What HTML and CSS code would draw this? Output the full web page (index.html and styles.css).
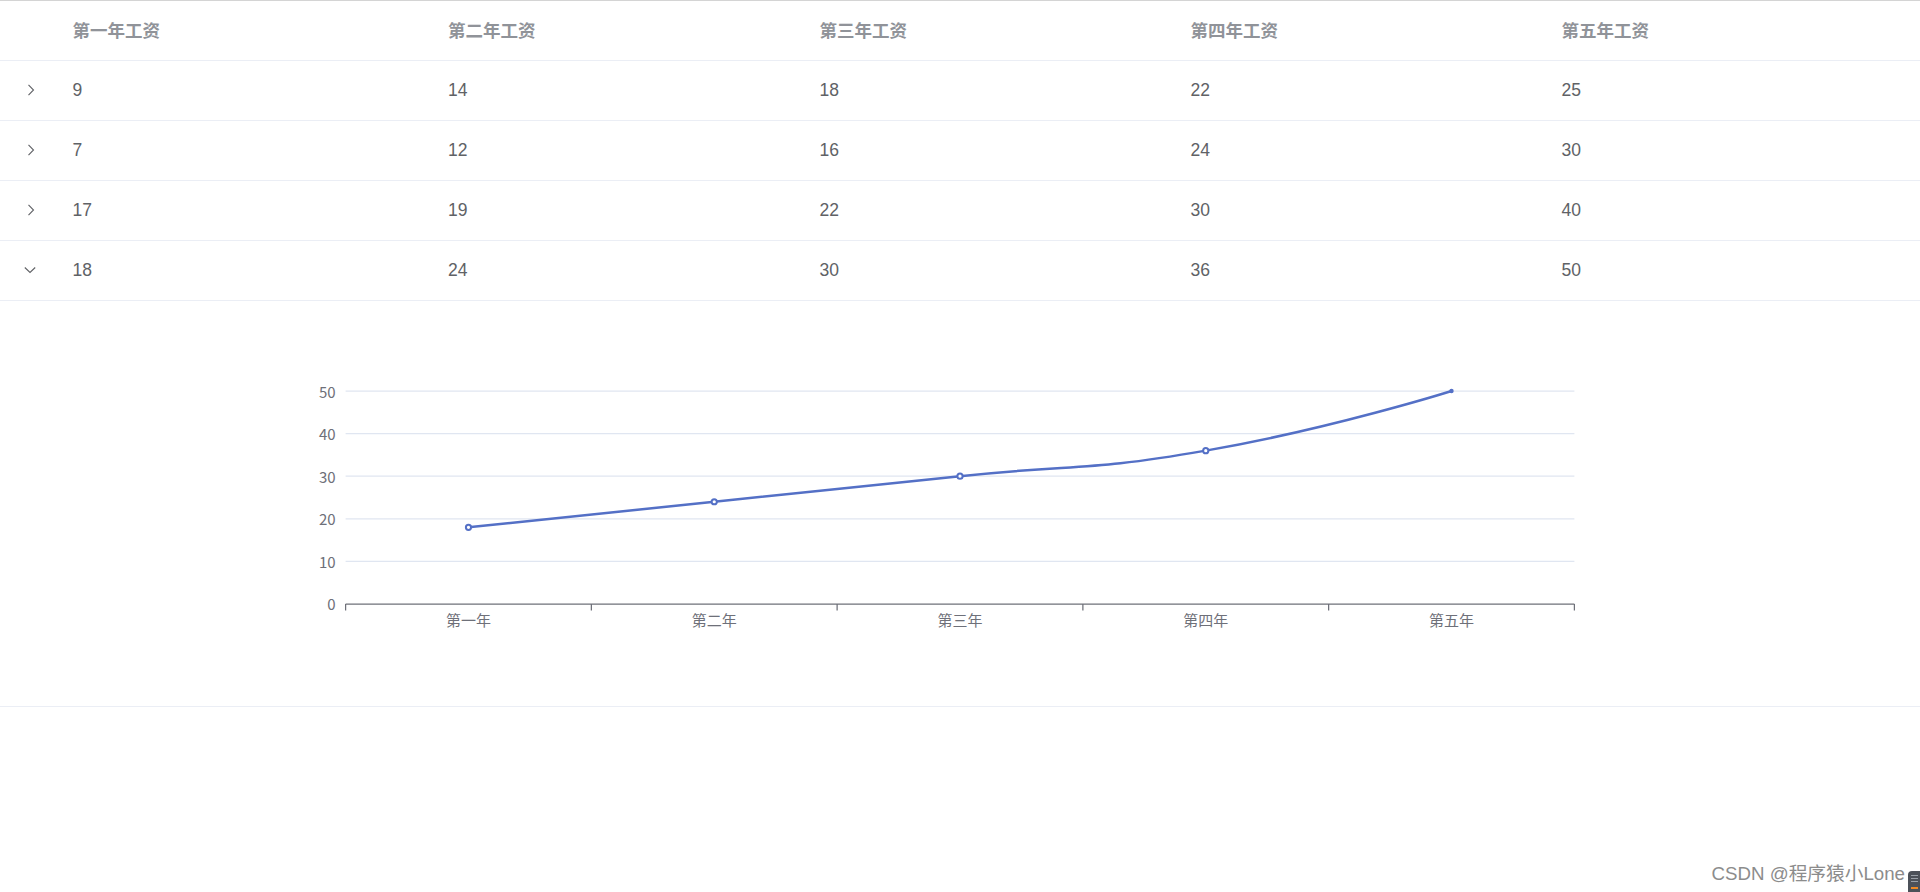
FILE: index.html
```html
<!DOCTYPE html>
<html lang="zh-CN">
<head>
<meta charset="utf-8">
<title>工资表</title>
<link rel="stylesheet" href="styles.css">
</head>
<body>
<div class="table">
  <div class="row head">
    <div class="cell expand"></div>
    <div class="cell">第一年工资</div>
    <div class="cell">第二年工资</div>
    <div class="cell">第三年工资</div>
    <div class="cell">第四年工资</div>
    <div class="cell">第五年工资</div>
  </div>
  <div class="row body-row">
    <div class="cell expand"><svg class="arrow" width="8" height="12" viewBox="0 0 8 12"><path d="M1.5 0.8 L6.5 6 L1.5 11.2" fill="none" stroke="#606266" stroke-width="1.1"/></svg></div>
    <div class="cell">9</div><div class="cell">14</div><div class="cell">18</div><div class="cell">22</div><div class="cell">25</div>
  </div>
  <div class="row body-row">
    <div class="cell expand"><svg class="arrow" width="8" height="12" viewBox="0 0 8 12"><path d="M1.5 0.8 L6.5 6 L1.5 11.2" fill="none" stroke="#606266" stroke-width="1.1"/></svg></div>
    <div class="cell">7</div><div class="cell">12</div><div class="cell">16</div><div class="cell">24</div><div class="cell">30</div>
  </div>
  <div class="row body-row">
    <div class="cell expand"><svg class="arrow" width="8" height="12" viewBox="0 0 8 12"><path d="M1.5 0.8 L6.5 6 L1.5 11.2" fill="none" stroke="#606266" stroke-width="1.1"/></svg></div>
    <div class="cell">17</div><div class="cell">19</div><div class="cell">22</div><div class="cell">30</div><div class="cell">40</div>
  </div>
  <div class="row body-row">
    <div class="cell expand"><svg class="arrow down" width="12" height="8" viewBox="0 0 12 8"><path d="M0.8 1.5 L6 6.5 L11.2 1.5" fill="none" stroke="#606266" stroke-width="1.1"/></svg></div>
    <div class="cell">18</div><div class="cell">24</div><div class="cell">30</div><div class="cell">36</div><div class="cell">50</div>
  </div>
  <div class="expanded">
    <svg class="chart" width="1536" height="363" viewBox="0 0 1536 363">
      <g stroke="#E0E6F1" stroke-width="1.25">
        <line x1="153.6" y1="75" x2="1382.4" y2="75"/>
        <line x1="153.6" y1="117.6" x2="1382.4" y2="117.6"/>
        <line x1="153.6" y1="160.2" x2="1382.4" y2="160.2"/>
        <line x1="153.6" y1="202.8" x2="1382.4" y2="202.8"/>
        <line x1="153.6" y1="245.4" x2="1382.4" y2="245.4"/>
      </g>
      <g stroke="#6E7079" stroke-width="1.25">
        <line x1="153.6" y1="288" x2="1382.4" y2="288"/>
        <line x1="153.6" y1="288" x2="153.6" y2="294.5"/>
        <line x1="399.36" y1="288" x2="399.36" y2="294.5"/>
        <line x1="645.12" y1="288" x2="645.12" y2="294.5"/>
        <line x1="890.88" y1="288" x2="890.88" y2="294.5"/>
        <line x1="1136.64" y1="288" x2="1136.64" y2="294.5"/>
        <line x1="1382.4" y1="288" x2="1382.4" y2="294.5"/>
      </g>
      <g class="ylab" text-anchor="end" dominant-baseline="central">
        <text x="143.6" y="75">50</text>
        <text x="143.6" y="117.6">40</text>
        <text x="143.6" y="160.2">30</text>
        <text x="143.6" y="202.8">20</text>
        <text x="143.6" y="245.4">10</text>
        <text x="143.6" y="287">0</text>
      </g>
      <g class="xlab" text-anchor="middle" dominant-baseline="central">
        <text x="276.48" y="303">第一年</text>
        <text x="522.24" y="303">第二年</text>
        <text x="768" y="303">第三年</text>
        <text x="1013.76" y="303">第四年</text>
        <text x="1259.52" y="303">第五年</text>
      </g>
      <path d="M276.48 211.32 C276.48 211.32 399.36 198.54 522.24 185.76 C645.12 172.98 645.12 172.98 768 160.2 C890.88 147.42 892.31 155.69 1013.76 134.64 C1138.07 113.09 1259.52 75 1259.52 75" fill="none" stroke="#5470C6" stroke-width="2.5" stroke-linejoin="round"/>
      <g fill="#fff" stroke="#5470C6" stroke-width="2">
        <circle cx="276.48" cy="211.32" r="2.6"/>
        <circle cx="522.24" cy="185.76" r="2.6"/>
        <circle cx="768" cy="160.2" r="2.6"/>
        <circle cx="1013.76" cy="134.64" r="2.6"/>
      </g>
      <circle cx="1259.52" cy="75" r="2.2" fill="#5470C6"/>
    </svg>
  </div>
</div>
<div class="watermark">CSDN @程序猿小Lone</div>
<div class="side-widget"><span></span><span></span><span></span><span class="orange"></span></div>
</body>
</html>
```

FILE: styles.css
```css
html, body {
  margin: 0;
  padding: 0;
  background: #ffffff;
}
body {
  width: 1920px;
  height: 892px;
  overflow: hidden;
  position: relative;
  font-family: "Liberation Sans", Arial, "Noto Sans CJK SC", sans-serif;
  font-size: 17.5px;
  color: #606266;
}
.table {
  border-top: 1px solid #d4d4d4;
}
.row {
  display: grid;
  grid-template-columns: 60px 375.5px 371.5px 371px 371px 1fr;
  height: 59px;
  border-bottom: 1px solid #EBEEF5;
  align-items: center;
}
.row.head {
  color: #909399;
  font-weight: bold;
}
.cell {
  padding-left: 12.5px;
  line-height: 24px;
  white-space: nowrap;
}
.body-row .cell {
  padding-bottom: 1px;
}
.cell.expand {
  padding-left: 0;
  display: flex;
  justify-content: center;
  align-items: center;
}
.arrow {
  display: block;
  margin-left: 2px;
}
.arrow.down {
  margin-left: 0;
}
.expanded {
  padding: 15px 0 27px;
  border-bottom: 1px solid #EBEEF5;
  display: flex;
  justify-content: center;
}
.chart {
  display: block;
}
.ylab text, .xlab text {
  font-family: "Noto Sans CJK SC", "Liberation Sans", sans-serif;
  font-size: 15px;
  fill: #6E7079;
}
.watermark {
  position: absolute;
  right: 15px;
  bottom: 7px;
  font-family: "Liberation Sans", Arial, "Noto Sans CJK SC", sans-serif;
  font-size: 18.7px;
  color: #8c8c8c;
  text-shadow: 0 0 1px #ffffff;
}
.side-widget {
  position: absolute;
  right: 0;
  bottom: 0;
  width: 12px;
  height: 21px;
  background: #4c5159;
  border-radius: 4px 0 0 0;
  display: flex;
  flex-direction: column;
  align-items: center;
  gap: 2px;
  padding-top: 4px;
  box-sizing: border-box;
}
.side-widget span {
  display: block;
  width: 7px;
  height: 1px;
  background: #9aa0a8;
}
.side-widget span.orange {
  height: 2px;
  background: #f08a24;
  margin-top: 3px;
}
```
